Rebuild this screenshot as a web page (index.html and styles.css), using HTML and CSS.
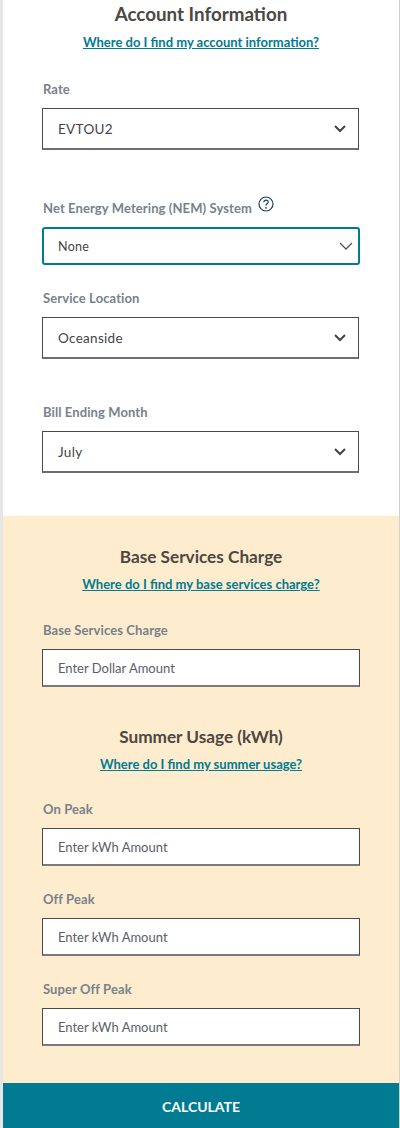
FILE: index.html
```html
<!DOCTYPE html>
<html>

<head>
    <meta charset="UTF-8">
    <title>Account Information</title>
    <link rel="stylesheet" href="styles.css">
</head>

<body>
    <div class="panel">
        <section class="account">
            <h2 class="title">Account Information</h2>
            <a class="help" href="#">Where do I find my account information?</a>

            <div class="field field-rate">
                <label>Rate</label>
                <div class="select">
                    <span>EVTOU2</span>
                    <svg class="chevron" viewBox="0 0 14 9"><path d="M2 2l5 5 5-5" /></svg>
                </div>
            </div>

            <div class="field field-nem">
                <label>Net Energy Metering (NEM) System
                    <svg class="info" viewBox="0 0 16 16">
                        <circle cx="8" cy="8" r="7" />
                        <path d="M5.8 6.2c0-1.3 1-2.1 2.2-2.1s2.2.8 2.2 2c0 1.700-2.200 1.700-2.200 3.500" />
                        <circle class="dot" cx="8" cy="11.800" r=".9" />
                    </svg>
                </label>
                <div class="select select-focus">
                    <span>None</span>
                    <svg class="chevron chevron-thin" viewBox="0 0 16 10"><path d="M2 2l6 6 6-6" /></svg>
                </div>
            </div>

            <div class="field field-location">
                <label>Service Location</label>
                <div class="select">
                    <span>Oceanside</span>
                    <svg class="chevron" viewBox="0 0 14 9"><path d="M2 2l5 5 5-5" /></svg>
                </div>
            </div>

            <div class="field field-month">
                <label>Bill Ending Month</label>
                <div class="select">
                    <span>July</span>
                    <svg class="chevron" viewBox="0 0 14 9"><path d="M2 2l5 5 5-5" /></svg>
                </div>
            </div>
        </section>

        <section class="usage">
            <h2 class="title">Base Services Charge</h2>
            <a class="help" href="#">Where do I find my base services charge?</a>

            <div class="field field-base">
                <label>Base Services Charge</label>
                <input type="text" placeholder="Enter Dollar Amount">
            </div>

            <h2 class="title title-summer">Summer Usage (kWh)</h2>
            <a class="help" href="#">Where do I find my summer usage?</a>

            <div class="field field-peak">
                <label>On Peak</label>
                <input type="text" placeholder="Enter kWh Amount">
            </div>
            <div class="field field-next">
                <label>Off Peak</label>
                <input type="text" placeholder="Enter kWh Amount">
            </div>
            <div class="field field-next">
                <label>Super Off Peak</label>
                <input type="text" placeholder="Enter kWh Amount">
            </div>
        </section>

        <button class="calculate" type="button">CALCULATE</button>
    </div>
</body>

</html>
```

FILE: styles.css
```css
* {
    padding: 0;
    margin: 0;
    box-sizing: border-box;
}

html,
body {
    height: 1128px;
    overflow: hidden;
}

body {
    font-family: Lato, "Noto Sans", sans-serif;
    background: #fff;
}

.panel {
    height: 1128px;
    border-left: 3px solid #e6e6e6;
    border-right: 1px solid #d0d0d0;
    display: flex;
    flex-direction: column;
}

.account {
    height: 516px;
    padding-top: 3px;
    background: #fff;
    text-align: center;
}

.account .help {
    margin-top: 8px;
}

.usage {
    height: 567px;
    padding-top: 30px;
    background: #feecce;
    text-align: center;
}

.title {
    font-size: 17.200px;
    line-height: 22px;
    font-weight: 700;
    color: #4d4742;
}

.account .title {
    font-size: 18.800px;
}

.help {
    display: block;
    margin-top: 7px;
    font-size: 13px;
    line-height: 18px;
    font-weight: 700;
    color: #007b92;
    text-decoration: underline;
}

.field {
    padding: 0 39px;
    text-align: left;
}

.field label {
    display: block;
    position: relative;
    padding-left: 1px;
    font-size: 13px;
    line-height: 18px;
    font-weight: 700;
    letter-spacing: .1px;
    color: #77828c;
    margin-bottom: 10px;
}

.field-rate {
    margin-top: 29px;
}

.field-nem {
    margin-top: 49px;
}

.field-location {
    margin-top: 24px;
}

.field-month {
    margin-top: 44px;
}

.field-base {
    margin-top: 28px;
}

.field-peak {
    margin-top: 27px;
}

.field-next {
    margin-top: 24px;
}

.select {
    height: 42px;
    width: 317px;
    padding: 0 11px 0 15px;
    border: 1px solid #4a4a4a;
    border-bottom: 2px solid #6f6f6f;
    background: #fff;
    display: flex;
    align-items: center;
    justify-content: space-between;
    font-size: 13.500px;
    letter-spacing: .3px;
    color: #444;
}

.select-focus {
    height: 38px;
    width: 318px;
    border: 2px solid #007b92;
    border-radius: 3px;
    padding: 0 4px 0 14px;
    font-size: 12.500px;
}

.chevron {
    width: 14px;
    height: 9px;
    fill: none;
    stroke: #444;
    stroke-width: 2;
}

.chevron-thin {
    width: 16px;
    height: 10px;
    stroke: #555;
    stroke-width: 1.300;
}

.info {
    position: absolute;
    left: 216px;
    top: -3px;
    width: 16px;
    height: 16px;
    fill: none;
    stroke: #1f3f5b;
    stroke-width: 1.200;
}

.info .dot {
    fill: #1f3f5b;
    stroke: none;
}

input {
    display: block;
    width: 318px;
    height: 38px;
    padding: 0 15px;
    border: 1px solid #4a4a4a;
    border-bottom: 2px solid #7a7a7a;
    background: #fff;
    font-family: inherit;
    font-size: 13px;
    border-radius: 0;
    outline: none;
}

input::placeholder {
    color: #5b6068;
    opacity: 1;
}

.title-summer {
    margin-top: 39px;
}

.calculate {
    height: 45px;
    padding-top: 1px;
    border: none;
    background: #007b92;
    color: #fff;
    font-family: inherit;
    font-size: 14px;
    font-weight: 700;
}
```
